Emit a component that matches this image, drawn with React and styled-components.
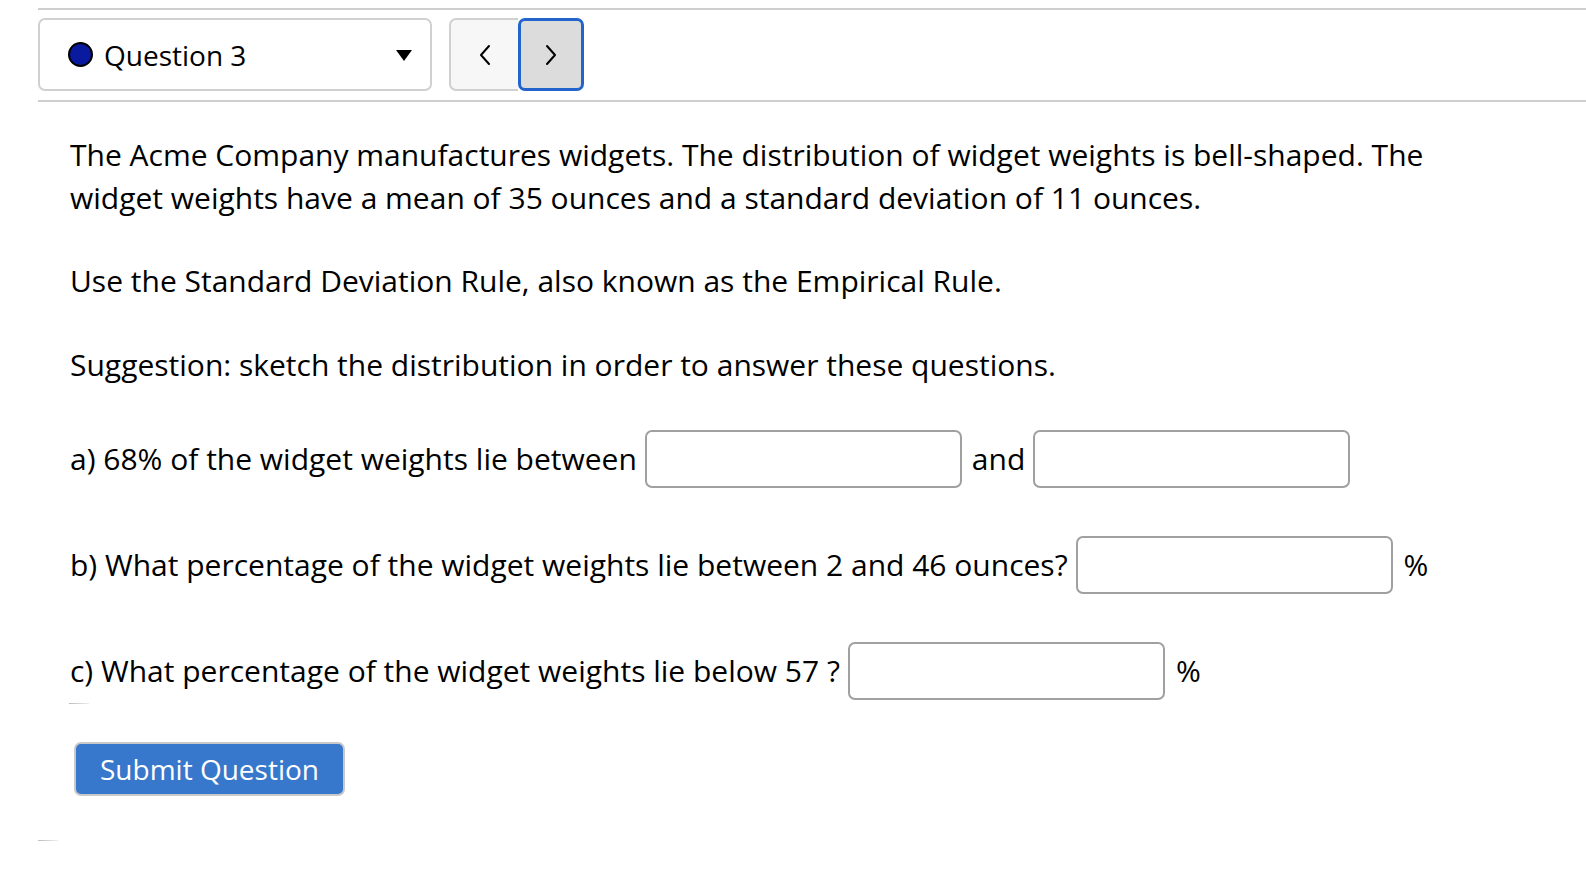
import React from 'react';
import styled, {createGlobalStyle} from 'styled-components';

const GlobalStyle = createGlobalStyle`
  body {
    margin: 0;
    background: #fff;
    font-family: "Open Sans", "Noto Sans", sans-serif;
    color: #000;
  }
`

const Page = styled.div`
  padding: 8px 0 0 38px;
`

const Rule = styled.div`
  border-top: 2px solid #cfcfcf;
`

const NavBar = styled.div`
  display: flex;
  align-items: stretch;
  gap: 17px;
  padding: 8px 0 9px;
`

const Select = styled.div`
  box-sizing: border-box;
  width: 394px;
  height: 73px;
  border: 2px solid #d0d0d0;
  border-radius: 7px;
  display: flex;
  align-items: center;
  padding: 0 18px 0 28px;
  font-size: 28px;
`

const Dot = styled.span`
  box-sizing: border-box;
  width: 25px;
  height: 25px;
  border-radius: 50%;
  background: #0a1a9e;
  border: 2px solid #000;
  margin-right: 11px;
`

const SelectLabel = styled.span`
  flex: 1;
  line-height: 1;
  margin-top: 1px;
`

const Caret = styled.span`
  width: 0;
  height: 0;
  border-left: 8px solid transparent;
  border-right: 8px solid transparent;
  border-top: 11px solid #000;
  margin-top: 2px;
`

const Pager = styled.div`
  display: flex;
`

const PageButton = styled.button`
  box-sizing: border-box;
  height: 73px;
  width: ${p => p.$width}px;
  display: flex;
  align-items: center;
  justify-content: center;
  padding: 0;
  background: ${p => p.$active ? '#dcdcdc' : '#f7f7f7'};
  border: ${p => p.$active ? '3px solid #2264cc' : '2px solid #d0d0d0'};
  border-radius: ${p => p.$active ? '7px' : '7px 0 0 7px'};
  border-right-width: ${p => p.$active ? '3px' : '0'};
  cursor: pointer;
`

const Content = styled.div`
  padding: 32px 0 0 32px;
  font-size: 30px;
  line-height: 42.5px;
`

const Para = styled.p`
  margin: 0 0 41px;
  max-width: 1390px;
`

const QuestionRow = styled.div`
  display: flex;
  align-items: center;
  gap: 8px;
  margin-top: ${p => p.$top}px;
`

const Answer = styled.input`
  box-sizing: border-box;
  width: 317px;
  height: 58px;
  border: 2px solid #a0a0a0;
  border-radius: 7px;
  margin: 0 2px 0 0;
  font: inherit;
  padding: 0 10px;
  outline: none;
`

const Unit = styled.span`
  margin-left: 1px;
`

const Tick = styled.div`
  width: 20px;
  height: 1px;
  background: linear-gradient(to right, #bbb, #eee);
  margin-left: ${p => p.$left}px;
  margin-top: ${p => p.$top}px;
`

const Submit = styled.button`
  box-sizing: border-box;
  height: 54px;
  padding: 0 24px;
  margin: 38px 0 0 4px;
  background: #3777cc;
  color: #fff;
  border: 2px solid #c9c9c9;
  border-radius: 7px;
  font-family: inherit;
  font-size: 28px;
  cursor: pointer;
`

const Chevron = ({dir}) => (
  <svg width="14" height="22" viewBox="0 0 14 22" fill="none">
    <path
      d={dir === 'left' ? 'M11 2 L3 11 L11 20' : 'M3 2 L11 11 L3 20'}
      stroke="#000"
      strokeWidth="2"
      strokeLinecap="round"
      strokeLinejoin="round"
    />
  </svg>
)

const App = () => {
  return (
    <>
      <GlobalStyle/>
      <Page>
        <Rule/>
        <NavBar>
          <Select>
            <Dot/>
            <SelectLabel>Question 3</SelectLabel>
            <Caret/>
          </Select>
          <Pager>
            <PageButton $width={69}><Chevron dir="left"/></PageButton>
            <PageButton $width={66} $active><Chevron dir="right"/></PageButton>
          </Pager>
        </NavBar>
        <Rule/>
        <Content>
          <Para>
            The Acme Company manufactures widgets. The distribution of widget weights is bell-shaped. The
            widget weights have a mean of 35 ounces and a standard deviation of 11 ounces.
          </Para>
          <Para>Use the Standard Deviation Rule, also known as the Empirical Rule.</Para>
          <Para style={{marginBottom: 0}}>Suggestion: sketch the distribution in order to answer these questions.</Para>

          <QuestionRow $top={44}>
            <span>a) 68% of the widget weights lie between</span>
            <Answer/>
            <span>and</span>
            <Answer/>
          </QuestionRow>
          <QuestionRow $top={48}>
            <span>b) What percentage of the widget weights lie between 2 and 46 ounces?</span>
            <Answer/>
            <Unit>%</Unit>
          </QuestionRow>
          <QuestionRow $top={48}>
            <span>c) What percentage of the widget weights lie below 57 ?</span>
            <Answer/>
            <Unit>%</Unit>
          </QuestionRow>
          <Tick $left={-1} $top={3}/>
          <Submit>Submit Question</Submit>
        </Content>
        <Tick $left={0} $top={44}/>
      </Page>
    </>
  );
};

export default App;
